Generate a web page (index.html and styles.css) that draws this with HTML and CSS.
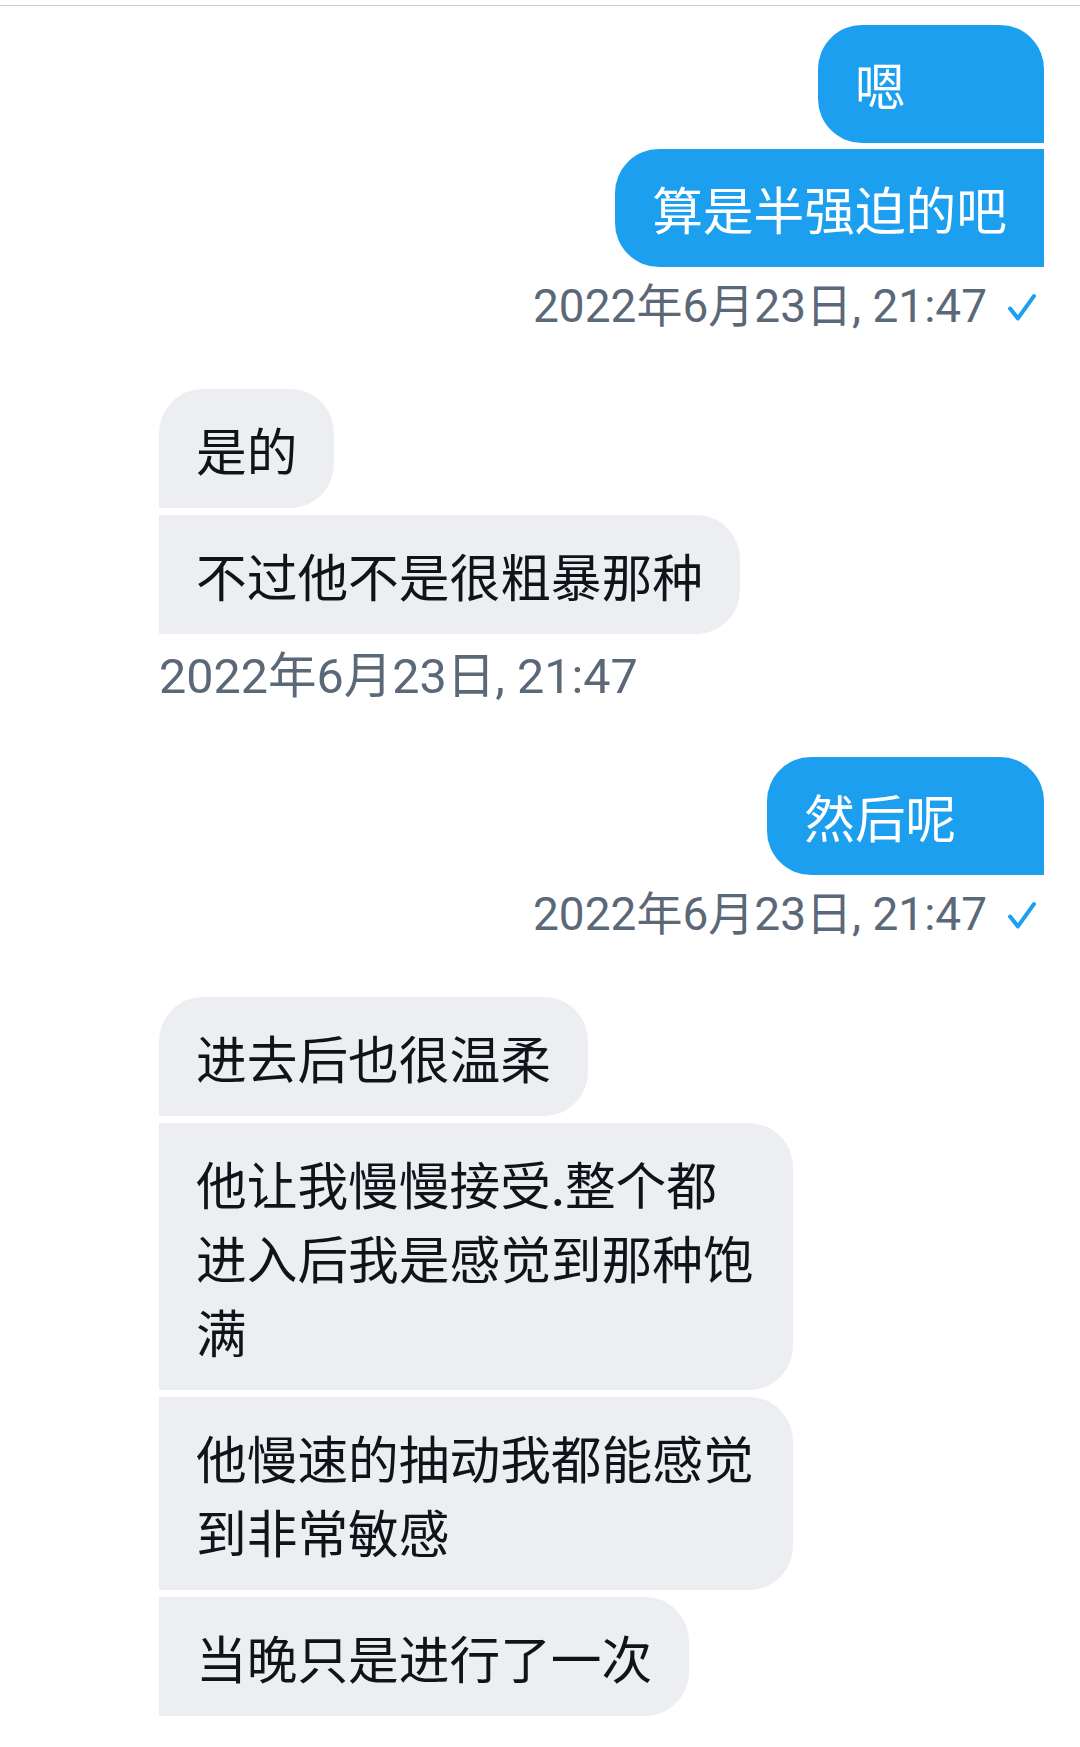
FILE: index.html
```html
<!DOCTYPE html>
<html lang="zh-CN">
<head>
<meta charset="utf-8">
<title>对话</title>
<link rel="stylesheet" href="styles.css">
</head>
<body>
<div class="topline"></div>
<main class="thread">

  <section class="group group--out">
    <div class="bubble bubble--out bubble--solo tail-2">嗯</div>
    <div class="bubble bubble--out bubble--last">算是半强迫的吧</div>
    <div class="meta meta--out">
      <span class="time">2022年6月23日, 21:47</span>
      <svg class="check" viewBox="0 0 28 28" aria-hidden="true"><path d="M3 15 L10.5 24.5 L26 3" /></svg>
    </div>
  </section>

  <section class="group group--in">
    <div class="bubble bubble--in bubble--first">是的</div>
    <div class="bubble bubble--in">不过他不是很粗暴那种</div>
    <div class="meta meta--in">
      <span class="time">2022年6月23日, 21:47</span>
    </div>
  </section>

  <section class="group group--out">
    <div class="bubble bubble--out bubble--solo tail-1">然后呢</div>
    <div class="meta meta--out">
      <span class="time">2022年6月23日, 21:47</span>
      <svg class="check" viewBox="0 0 28 28" aria-hidden="true"><path d="M3 15 L10.5 24.5 L26 3" /></svg>
    </div>
  </section>

  <section class="group group--in">
    <div class="bubble bubble--in bubble--first">进去后也很温柔</div>
    <div class="bubble bubble--in">他让我慢慢接受.整个都进入后我是感觉到那种饱满</div>
    <div class="bubble bubble--in">他慢速的抽动我都能感觉到非常敏感</div>
    <div class="bubble bubble--in">当晚只是进行了一次</div>
  </section>

</main>
</body>
</html>
```
FILE: styles.css
```css
html, body {
  margin: 0;
  padding: 0;
  background: #ffffff;
}

body {
  width: 1080px;
  min-height: 1747px;
  font-family: "Noto Sans CJK SC", "Noto Sans", sans-serif;
  overflow: hidden;
}

.topline {
  height: 1px;
  margin-top: 5px;
  background: #cdcdcd;
}

.thread {
  display: flex;
  flex-direction: column;
  padding: 19px 36px 0 159px;
}

.group {
  display: flex;
  flex-direction: column;
  gap: 6px;
}

.group--out {
  align-items: flex-end;
  margin-bottom: 55px;
}

.group--in {
  align-items: flex-start;
  gap: 7px;
  margin-bottom: 52px;
}

.bubble {
  box-sizing: border-box;
  max-width: 634px;
  padding: 22px 37px;
  font-size: 50.7px;
  line-height: 74px;
  word-break: break-all;
}

.group--in .bubble {
  padding-top: 22.5px;
  padding-bottom: 22.5px;
}

.bubble--out {
  background: #1d9ff0;
  color: #ffffff;
  border-radius: 44px 0 0 44px;
}

.bubble--out.bubble--solo {
  border-radius: 44px 44px 0 44px;
}

.bubble--in {
  background: #eceef2;
  color: #0f1419;
  border-radius: 0 44px 44px 0;
}

.bubble--in.bubble--first {
  border-radius: 44px 44px 44px 0;
}

/* trailing room kept after very short sent messages */
.tail-1 { padding-right: calc(37px + 1em); }
.tail-2 { padding-right: calc(37px + 2em); }

.meta {
  display: flex;
  align-items: center;
  height: 56px;
  line-height: 56px;
  color: #5b6878;
  font-family: Roboto, "Noto Sans CJK SC", sans-serif;
  white-space: nowrap;
}

.meta--out {
  margin-top: 5px;
  margin-right: 8px;
  gap: 20px;
  font-size: 46px;
}

.meta--in {
  margin-top: 8px;
  font-size: 48.5px;
}

.check {
  width: 29px;
  height: 29px;
  margin-top: 2px;
  fill: none;
  stroke: #1d9ff0;
  stroke-width: 3.9;
  stroke-linecap: round;
  stroke-linejoin: round;
}
```
